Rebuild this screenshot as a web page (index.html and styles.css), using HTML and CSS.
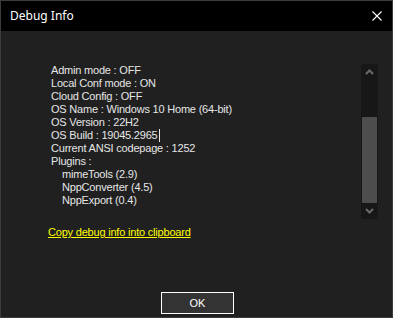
FILE: index.html
```html
<!DOCTYPE html>
<html>
<head>
<meta charset="utf-8">
<link rel="stylesheet" href="styles.css">
</head>
<body>
<div class="window">
  <div class="titlebar">
    <span class="title">Debug Info</span>
    <svg class="close" width="10" height="10" viewBox="0 0 10 10"><path d="M0.5 0.5 L9.5 9.5 M9.5 0.5 L0.5 9.5" stroke="#ffffff" stroke-width="1.1" fill="none"/></svg>
  </div>
  <div class="content">
    <div class="textbox">
      <div class="text">
        <div class="line">Admin mode : OFF</div>
        <div class="line">Local Conf mode : ON</div>
        <div class="line">Cloud Config : OFF</div>
        <div class="line">OS Name : Windows 10 Home (64-bit)</div>
        <div class="line">OS Version : 22H2</div>
        <div class="line">OS Build : 19045.2965<span class="caret"></span></div>
        <div class="line">Current ANSI codepage : 1252</div>
        <div class="line">Plugins :</div>
        <div class="line indent">mimeTools (2.9)</div>
        <div class="line indent">NppConverter (4.5)</div>
        <div class="line indent">NppExport (0.4)</div>
      </div>
      <div class="scrollbar">
        <div class="arrow">
          <svg width="9" height="6" viewBox="0 0 9 6"><path d="M1 5 L4.5 1.5 L8 5" stroke="#6a6a6a" stroke-width="2" fill="none"/></svg>
        </div>
        <div class="track"><div class="thumb"></div></div>
        <div class="arrow">
          <svg width="9" height="6" viewBox="0 0 9 6"><path d="M1 1 L4.5 4.5 L8 1" stroke="#6a6a6a" stroke-width="2" fill="none"/></svg>
        </div>
      </div>
    </div>
    <a class="link" href="#">Copy debug info into clipboard</a>
    <div class="footer">
      <button class="ok">OK</button>
    </div>
  </div>
</div>
</body>
</html>
```
FILE: styles.css
```css
html, body {
  margin: 0;
  padding: 0;
  background: #202020;
}
.window {
  width: 393px;
  height: 318px;
  box-sizing: border-box;
  border: 1px solid #3c3c3c;
  background: #202020;
  display: flex;
  flex-direction: column;
  font-family: "Liberation Sans", Arial, sans-serif;
  font-size: 11px;
  letter-spacing: -0.2px;
  color: #e6e6e6;
}
.titlebar {
  height: 30px;
  flex: none;
  background: #000000;
  display: flex;
  align-items: center;
  justify-content: space-between;
  padding: 0 10px 0 9px;
}
.title {
  color: #ffffff;
  font-family: "Noto Sans", "Open Sans", sans-serif;
  font-size: 12px;
  line-height: 16px;
  letter-spacing: 0;
}
.close {
  display: block;
}
.content {
  flex: 1;
  display: flex;
  flex-direction: column;
  padding: 33px 14px 0 46px;
}
.textbox {
  height: 155px;
  display: flex;
}
.text {
  flex: 1;
  padding-left: 4px;
}
.line {
  height: 13px;
  line-height: 13px;
  white-space: nowrap;
}
.indent {
  padding-left: 11px;
}
.caret {
  display: inline-block;
  width: 1px;
  height: 13px;
  margin-left: 1px;
  background: #e6e6e6;
  vertical-align: top;
}
.scrollbar {
  width: 17px;
  background: #171717;
  display: flex;
  flex-direction: column;
}
.arrow {
  height: 17px;
  display: flex;
  align-items: center;
  justify-content: center;
}
.track {
  flex: 1;
  padding: 36px 1px 0 1px;
}
.thumb {
  height: 86px;
  background: #4d4d4d;
}
.link {
  margin-top: 6px;
  align-self: flex-start;
  color: #ffff00;
  text-decoration: underline;
  line-height: 14px;
  margin-left: 1px;
}
.footer {
  margin-top: auto;
  margin-bottom: 3px;
  display: flex;
  justify-content: center;
  margin-left: -46px;
  margin-right: -14px;
  padding-left: 2px;
}
.ok {
  width: 73px;
  height: 22px;
  box-sizing: border-box;
  background: #333333;
  border: 1px solid #ffffff;
  color: #ffffff;
  font-family: "Liberation Sans", Arial, sans-serif;
  font-size: 11px;
  line-height: 13px;
  padding: 0;
}
```
